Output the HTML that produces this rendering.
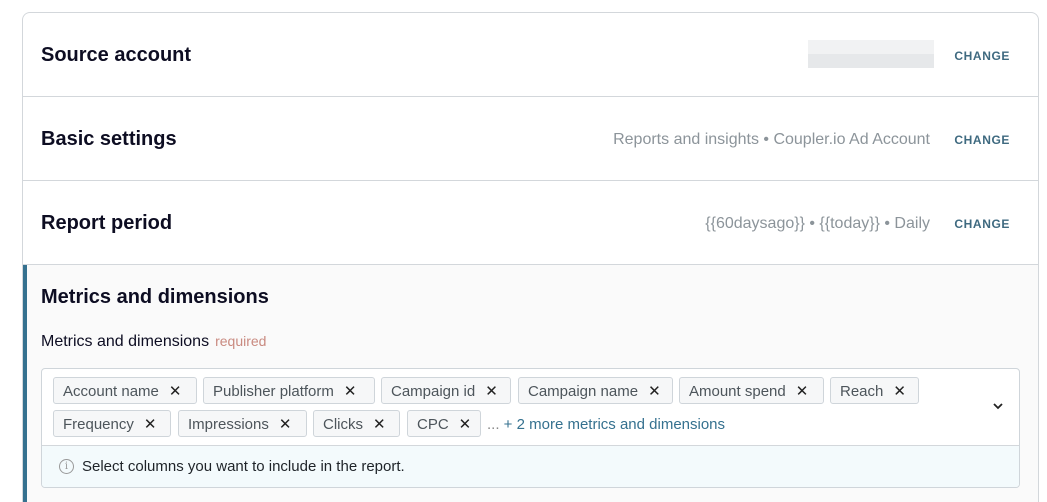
<!DOCTYPE html>
<html><head><style>
*{box-sizing:border-box;margin:0;padding:0}
html,body{width:1047px;height:502px;overflow:hidden}
body{background:#fff;font-family:"Liberation Sans",sans-serif;position:relative}
.card{position:absolute;left:22px;top:12px;width:1017px;height:490px;border:1px solid #d3d7db;border-bottom:none;border-radius:8px 8px 0 0;overflow:hidden}
.row{position:absolute;left:0;width:100%;height:84px;border-bottom:1px solid #d3d7db}
.row h2{position:absolute;left:18px;top:31px;font-size:20px;font-weight:bold;color:#0d0d22}
.row .val{position:absolute;right:108px;top:34px;font-size:16px;color:#8c949a}
.row .ch{position:absolute;right:28px;top:36px;font-size:12px;font-weight:bold;color:#3f6a80;letter-spacing:.6px}
.met{position:absolute;left:0;top:252px;width:100%;height:238px;background:#fafafa;border-left:4px solid #35718f}
.met h2{position:absolute;left:14px;top:21px;font-size:20px;font-weight:bold;color:#0d0d22}
.lbl{position:absolute;left:14px;top:68px;font-size:16px;color:#0d0d22}
.lbl span{color:#c98a80;font-size:14px;margin-left:6px}
.box{position:absolute;left:14px;top:103px;width:979px;height:120px;border:1px solid #cfd5da;border-radius:4px;background:#fff;overflow:hidden}
.chip{position:absolute;height:27px;border:1px solid #cfd5da;border-radius:3px;background:#f6f7f8;font-size:15px;color:#4d555b;padding:4px 0 0 9px;white-space:nowrap}
.chip b{font-weight:normal;margin-left:10px;color:#222;font-size:15px}
.more{position:absolute;left:445px;top:47px;font-size:15px;color:#35718f}
.more i{font-style:normal;color:#888}
.info{position:absolute;left:0;top:76px;width:100%;height:44px;background:#f3fafc;border-top:1px solid #d3d7db;font-size:15px;color:#1e2328;padding:12px 0 0 40px}
.ic{position:absolute;left:17px;top:13px;width:15px;height:15px;border:1px solid #999;border-radius:50%;font-size:10px;color:#999;text-align:center;line-height:13px;font-family:"DejaVu Serif",serif}
</style></head><body>
<div class="card">
 <div class="row" style="top:0"><h2>Source account</h2>
  <div style="position:absolute;left:785px;top:27px;width:126px;height:28px;background:linear-gradient(#f1f2f3 50%,#e6e8ea 50%)"></div>
  <div class="ch">CHANGE</div></div>
 <div class="row" style="top:84px"><h2>Basic settings</h2><div class="val">Reports and insights • Coupler.io Ad Account</div><div class="ch">CHANGE</div></div>
 <div class="row" style="top:168px"><h2>Report period</h2><div class="val">{{60daysago}} • {{today}} • Daily</div><div class="ch">CHANGE</div></div>
 <div class="met">
  <h2>Metrics and dimensions</h2>
  <div class="lbl">Metrics and dimensions<span>required</span></div>
  <div class="box">
   <div class="chip" style="left:11px;top:8px;width:144px">Account name<b>✕</b></div>
   <div class="chip" style="left:161px;top:8px;width:172px">Publisher platform<b>✕</b></div>
   <div class="chip" style="left:339px;top:8px;width:130px">Campaign id<b>✕</b></div>
   <div class="chip" style="left:476px;top:8px;width:155px">Campaign name<b>✕</b></div>
   <div class="chip" style="left:637px;top:8px;width:145px">Amount spend<b>✕</b></div>
   <div class="chip" style="left:788px;top:8px;width:89px">Reach<b>✕</b></div>
   <div class="chip" style="left:11px;top:41px;width:118px">Frequency<b>✕</b></div>
   <div class="chip" style="left:136px;top:41px;width:129px">Impressions<b>✕</b></div>
   <div class="chip" style="left:271px;top:41px;width:87px">Clicks<b>✕</b></div>
   <div class="chip" style="left:365px;top:41px;width:74px">CPC<b>✕</b></div>
   <div class="more"><i>... </i>+ 2 more metrics and dimensions</div>
   <svg style="position:absolute;left:950px;top:33px" width="12" height="8" viewBox="0 0 12 8"><path d="M2 2l4 4 4-4" stroke="#222" stroke-width="1.8" fill="none"/></svg>
   <div class="info"><div class="ic">i</div>Select columns you want to include in the report.</div>
  </div>
 </div>
</div>
</body></html>
